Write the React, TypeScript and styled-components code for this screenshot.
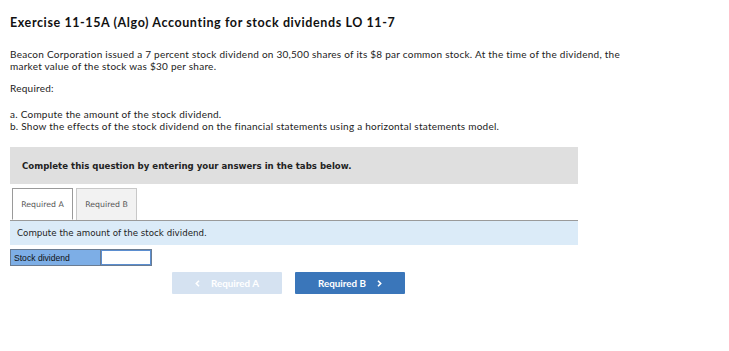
import React from "react";
import styled, { createGlobalStyle } from "styled-components";

const Global = createGlobalStyle`
  html, body { margin: 0; padding: 0; background: #fff; }
  * { box-sizing: border-box; }
`;

const Page = styled.div`
  width: 729px;
  padding: 16px 10px 0 10px;
  font-family: Lato, "Open Sans", sans-serif;
  color: #222;
`;

const Title = styled.h1`
  margin: 0;
  font-size: 12.5px;
  font-weight: 700;
  line-height: 14px;
  letter-spacing: 0.6px;
  color: #111;
`;

const Para = styled.p<{ $top: number }>`
  margin: ${(p) => p.$top}px 0 0 0;
  font-size: 10px;
  line-height: 12px;
  letter-spacing: 0.25px;
  width: 630px;
`;

const Panel = styled.div`
  width: 568px;
  margin-top: 15px;
`;

const Banner = styled.div`
  background: #dfdfdf;
  height: 37px;
  display: flex;
  align-items: center;
  padding-left: 12px;
  font-family: "DejaVu Sans", Verdana, sans-serif;
  font-weight: 700;
  font-size: 8.6px;
  color: #222;
`;

const TabBar = styled.div`
  display: flex;
  gap: 3px;
  padding: 4px 0 0 2px;
  border-bottom: 1px solid #9a9a9a;
`;

const Tab = styled.div<{ $active?: boolean }>`
  width: 61px;
  height: 32px;
  display: flex;
  align-items: center;
  justify-content: center;
  font-family: "DejaVu Sans", Verdana, sans-serif;
  font-size: 7.8px;
  color: #555;
  background: ${(p) => (p.$active ? "#fff" : "#f2f2f2")};
  border: 1px solid ${(p) => (p.$active ? "#9a9a9a" : "#c8c8c8")};
  border-bottom: ${(p) => (p.$active ? "1px solid #fff" : "none")};
  margin-bottom: ${(p) => (p.$active ? "-1px" : "0")};
`;

const Instruction = styled.div`
  background: #dbebf8;
  height: 24px;
  display: flex;
  align-items: center;
  padding-left: 7px;
  font-family: "DejaVu Sans", Verdana, sans-serif;
  font-size: 8.7px;
  color: #222;
`;

const AnswerRow = styled.div`
  display: flex;
  margin-top: 4px;
  height: 17px;
`;

const Label = styled.div`
  width: 90px;
  background: #7daee6;
  border: 1px solid #6a7c92;
  border-right: none;
  font-family: "Liberation Sans", Arial, sans-serif;
  font-size: 8.6px;
  color: #111;
  display: flex;
  align-items: center;
  padding-left: 3px;
`;

const Input = styled.input`
  width: 52px;
  height: 17px;
  border: 1px solid #6a7c92;
  box-shadow: inset 0 0 0 1px #5b8ed0;
  padding: 0;
  outline: none;
  background: #fff;
`;

const NavRow = styled.div`
  display: flex;
  gap: 13px;
  margin-top: 6px;
  padding-left: 162px;
`;

const NavButton = styled.button<{ $primary?: boolean }>`
  width: 110px;
  height: 22px;
  border: none;
  border-radius: 1px;
  background: ${(p) => (p.$primary ? "#3a76ba" : "#d5e2f1")};
  color: #fff;
  font-family: Lato, "Open Sans", sans-serif;
  font-weight: 700;
  font-size: 9.8px;
  display: flex;
  align-items: center;
  justify-content: center;
  gap: 11px;
  padding: 0;
`;

const Chevron = ({ dir }: { dir: "left" | "right" }) => (
  <svg width="5" height="7" viewBox="0 0 5 7">
    <path
      d={dir === "left" ? "M4 0.8 L1.3 3.5 L4 6.2" : "M1 0.8 L3.7 3.5 L1 6.2"}
      fill="none"
      stroke="#fff"
      strokeWidth="1.6"
    />
  </svg>
);

export default function App() {
  return (
    <>
      <Global />
      <Page>
        <Title>Exercise 11-15A (Algo) Accounting for stock dividends LO 11-7</Title>
        <Para $top={18}>
          Beacon Corporation issued a 7 percent stock dividend on 30,500 shares of its $8 par common stock. At the time of the dividend, the market value of the stock was $30 per share.
        </Para>
        <Para $top={10}>Required:</Para>
        <Para $top={14}>
          a. Compute the amount of the stock dividend.
          <br />
          b. Show the effects of the stock dividend on the financial statements using a horizontal statements model.
        </Para>
        <Panel>
          <Banner>Complete this question by entering your answers in the tabs below.</Banner>
          <TabBar>
            <Tab $active>Required A</Tab>
            <Tab>Required B</Tab>
          </TabBar>
          <Instruction>Compute the amount of the stock dividend.</Instruction>
          <AnswerRow>
            <Label>Stock dividend</Label>
            <Input aria-label="Stock dividend" />
          </AnswerRow>
          <NavRow>
            <NavButton>
              <Chevron dir="left" />
              Required A
            </NavButton>
            <NavButton $primary>
              Required B
              <Chevron dir="right" />
            </NavButton>
          </NavRow>
        </Panel>
      </Page>
    </>
  );
}
